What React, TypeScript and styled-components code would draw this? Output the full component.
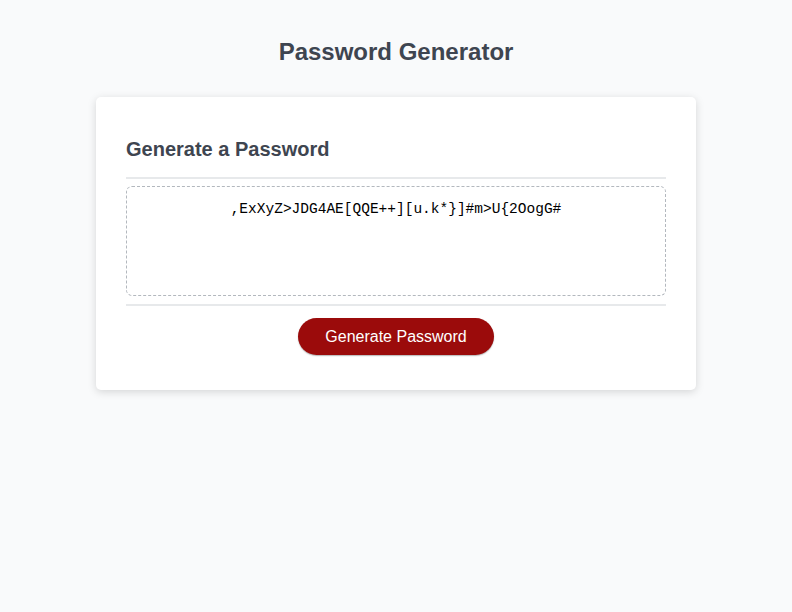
import React, { useEffect, useRef } from "react";
import styled, { createGlobalStyle } from "styled-components";

const GlobalStyle = createGlobalStyle`
  html, body {
    margin: 0;
    padding: 0;
    background: #f9fafb;
    font-family: "Liberation Sans", Arial, Helvetica, sans-serif;
  }
  * { box-sizing: border-box; }
`;

const Page = styled.div`
  min-height: 612px;
  display: flex;
  flex-direction: column;
  align-items: center;
  padding-top: 38px;
`;

const Title = styled.h1`
  margin: 0 0 31px;
  font-size: 24px;
  line-height: 28px;
  font-weight: 700;
  color: #3e4550;
`;

const Card = styled.section`
  width: 600px;
  background: #ffffff;
  border-radius: 5px;
  box-shadow: 0 2px 8px rgba(0, 0, 0, 0.15);
  padding: 40px 30px 35px;
  display: flex;
  flex-direction: column;
`;

const CardHeader = styled.h2`
  margin: 0 0 16px;
  font-size: 20px;
  line-height: 24px;
  font-weight: 700;
  color: #3e4550;
`;

const Divider = styled.div`
  height: 2px;
  background: #e7e9eb;
`;

const PasswordBox = styled.textarea`
  appearance: none;
  display: block;
  width: 100%;
  height: 110px;
  margin: 7px 0 8px;
  padding: 14px 15px;
  border: 1px dashed #b3b8be;
  border-radius: 6px;
  resize: none;
  overflow: hidden;
  outline: none;
  text-align: center;
  font-family: "Liberation Mono", "Courier New", monospace;
  font-size: 14.5px;
  color: #000;
  background: #fff;
`;

const Footer = styled.div`
  display: flex;
  justify-content: center;
  padding-top: 12px;
`;

const Button = styled.button`
  border: none;
  background: #9b0b0b;
  color: #ffffff;
  border-radius: 20px;
  height: 37px;
  padding: 0 27px;
  font-family: "Liberation Sans", Arial, Helvetica, sans-serif;
  font-size: 16px;
  line-height: 37px;
  cursor: pointer;
  box-shadow: 0 1px 2px rgba(0, 0, 0, 0.1), 0 1px 1px rgba(0, 0, 0, 0.2);
`;

const PASSWORD = ",ExXyZ>JDG4AE[QQE++][u.k*}]#m>U{2OogG#";

export default function App() {
  const ref = useRef<HTMLTextAreaElement>(null);
  useEffect(() => {
    const el = ref.current;
    if (el) {
      el.focus();
      el.setSelectionRange(PASSWORD.length, PASSWORD.length);
    }
  }, []);
  return (
    <>
      <GlobalStyle />
      <Page>
        <Title>Password Generator</Title>
        <Card>
          <CardHeader>Generate a Password</CardHeader>
          <Divider />
          <PasswordBox ref={ref} readOnly value={PASSWORD} aria-label="Generated Password" />
          <Divider />
          <Footer>
            <Button type="button">Generate Password</Button>
          </Footer>
        </Card>
      </Page>
    </>
  );
}
